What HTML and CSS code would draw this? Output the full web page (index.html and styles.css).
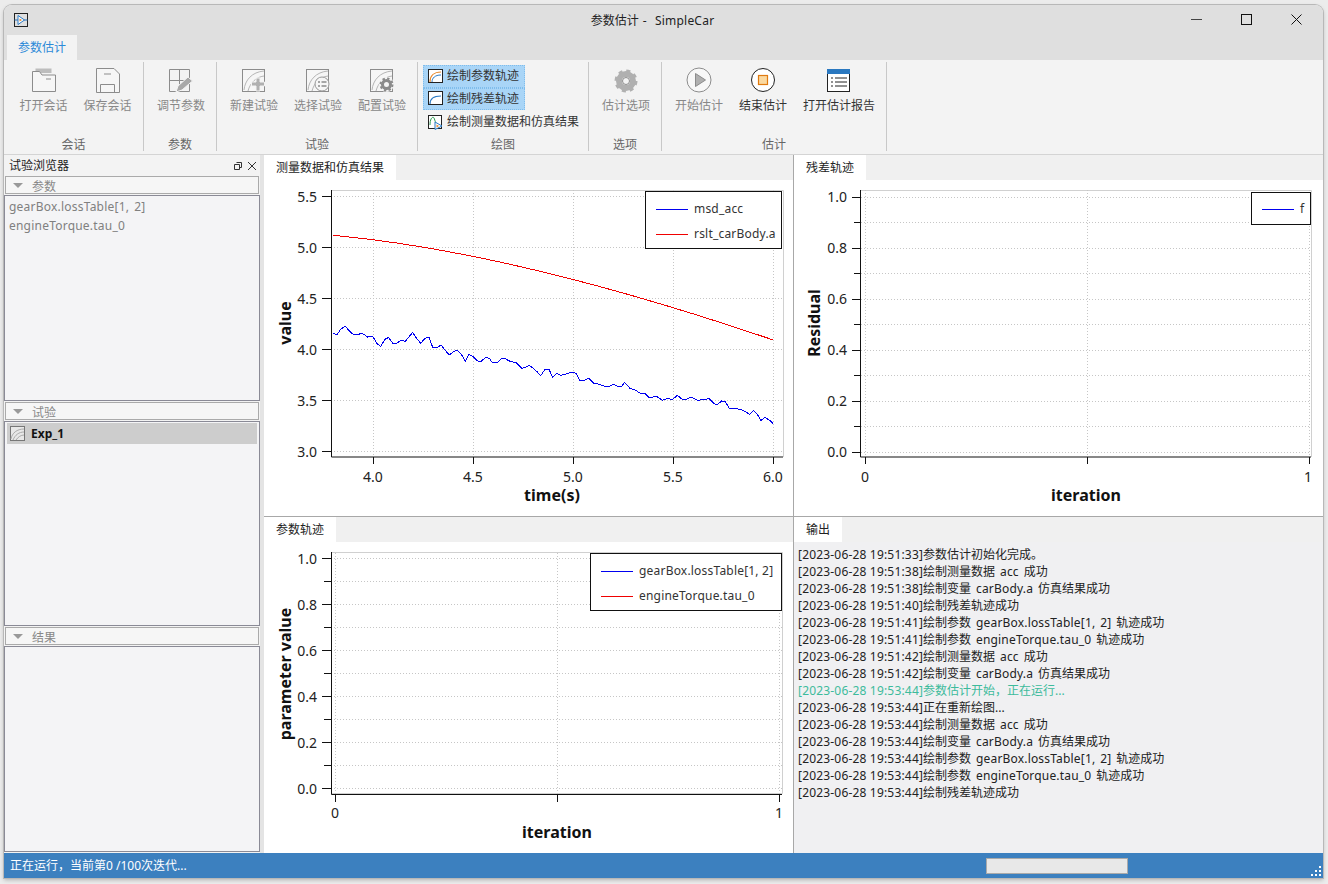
FILE: index.html
```html
<!DOCTYPE html>
<html lang="zh">
<head>
<meta charset="utf-8">
<title>参数估计 - SimpleCar</title>
<link rel="stylesheet" href="styles.css">
</head>
<body>
<div class="window">
  <header class="titlebar">
    <svg class="app-icon" width="14" height="14" viewBox="0 0 14 14"><rect x=".5" y=".5" width="13" height="13" fill="none" stroke="#222"/><path d="M.5 7H4M10 7h3.500" stroke="#2a6fb5"/><path d="M4 2.500V11.500L10.500 7Z" fill="#fff" stroke="#2a7ac5"/><path d="M5.500 5.500V8.500L8 7Z" fill="#e8872a"/></svg>
    <span class="title">参数估计 -&nbsp; <span class="lat">SimpleCar</span></span>
    <div class="controls">
      <svg width="12" height="12" viewBox="0 0 12 12"><path d="M0 5.500H11" stroke="#444"/></svg>
      <svg width="12" height="12" viewBox="0 0 12 12"><rect x=".5" y=".5" width="10" height="10" fill="none" stroke="#111"/></svg>
      <svg width="12" height="12" viewBox="0 0 12 12"><path d="M.5 .5L10.500 10.500M10.500 .5L.5 10.500" stroke="#111"/></svg>
    </div>
  </header>
  <div class="tabbar"><div class="rtab">参数估计</div></div>
  <div class="ribbon">
    <section class="group g1">
      <div class="btns">
        <div class="btn off"><svg class="ico" width="26" height="26" viewBox="0 0 26 26"><path d="M4.500 1.500H20.500V6H4.500Z" fill="#bdbdbd"/><path d="M1.500 4.500H8.500L11 8H24.500V24.500H1.500Z" fill="#f6f6f6" stroke="#8c8c8c"/><path d="M15 12H20" stroke="#8c8c8c"/></svg><span>打开会话</span></div>
        <div class="btn off"><svg class="ico" width="26" height="26" viewBox="0 0 26 26"><path d="M1.500 1.500H19L24.500 7V25.500H1.500Z" fill="#f6f6f6" stroke="#8c8c8c"/><path d="M9 7H16" stroke="#8c8c8c"/><path d="M5.500 25V17.500H19.500V25" fill="none" stroke="#8c8c8c"/></svg><span>保存会话</span></div>
      </div>
      <div class="glabel">会话</div>
    </section>
    <section class="group g2">
      <div class="btns">
        <div class="btn off"><svg class="ico" width="26" height="26" viewBox="0 0 26 26"><path d="M1.500 2.500H21.500V24.500H1.500ZM11.500 2.500V24.500M1.500 13.500H21.500" fill="none" stroke="#8c8c8c"/><path d="M8 25L10 19L20 10L24.500 14L14 23Z" fill="#a8a8a8" stroke="#f3f3f3"/></svg><span>调节参数</span></div>
      </div>
      <div class="glabel">参数</div>
    </section>
    <section class="group g3">
      <div class="btns">
        <div class="btn off"><svg class="ico" width="26" height="26" viewBox="0 0 26 26"><rect x="1.500" y="2.500" width="22" height="22" fill="#f6f6f6" stroke="#8c8c8c"/><path d="M3 23C4 13 11 5 23 4M7 24C9 16 15 10 23 9" fill="none" stroke="#b5b5b5"/><path d="M15 11H19V15H23.500V19H19V24H15V19H10.500V15H15Z" fill="#b0b0b0" stroke="#f3f3f3"/></svg><span>新建试验</span></div>
        <div class="btn off"><svg class="ico" width="26" height="26" viewBox="0 0 26 26"><rect x="1.500" y="2.500" width="22" height="22" fill="#f6f6f6" stroke="#8c8c8c"/><path d="M3 23C4 13 11 5 23 4M7 24C9 16 15 10 23 9" fill="none" stroke="#b5b5b5"/><circle cx="17" cy="17" r="7" fill="#f6f6f6" stroke="#999"/><path d="M13 15h2M13 19h2M16.500 15h5M16.500 19h5" stroke="#8c8c8c" stroke-width="1.500"/></svg><span>选择试验</span></div>
        <div class="btn off"><svg class="ico" width="26" height="26" viewBox="0 0 26 26"><rect x="1.500" y="2.500" width="22" height="22" fill="#f6f6f6" stroke="#8c8c8c"/><path d="M3 23C4 13 11 5 23 4M7 24C9 16 15 10 23 9" fill="none" stroke="#b5b5b5"/><circle cx="17.500" cy="17.500" r="7.500" fill="#f3f3f3"/><circle cx="17.500" cy="17.500" r="4" fill="none" stroke="#8a8a8a" stroke-width="3"/><circle cx="17.500" cy="17.500" r="6" fill="none" stroke="#8a8a8a" stroke-width="2" stroke-dasharray="2.350 2.350"/></svg><span>配置试验</span></div>
      </div>
      <div class="glabel">试验</div>
    </section>
    <section class="group g4">
      <div class="rows">
        <div class="row on"><svg width="15" height="15" viewBox="0 0 15 15"><rect x=".5" y=".5" width="14" height="13" fill="#fff" stroke="#222"/><path d="M2 13C2 7 6 3 13 3" fill="none" stroke="#e8872a" stroke-width="1.200"/><path d="M4 13C4 9 7 6 13 6" fill="none" stroke="#2a7ac5"/></svg><span>绘制参数轨迹</span></div>
        <div class="row on"><svg width="15" height="15" viewBox="0 0 15 15"><rect x=".5" y=".5" width="14" height="13" fill="#fff" stroke="#222"/><path d="M2 13C2 8 5 5 13 5" fill="none" stroke="#2a7ac5" stroke-width="1.200"/></svg><span>绘制残差轨迹</span></div>
        <div class="row"><svg width="15" height="15" viewBox="0 0 15 15"><rect x=".5" y=".5" width="13" height="13" fill="#fff" stroke="#222"/><path d="M2 10C2 3 5 1 6 3S8 11 11 11" fill="none" stroke="#2a9a50"/><path d="M7 7V14.500L14 11Z" fill="#fff" stroke="#2a7ac5"/><path d="M8.500 9.500V12.500L11 11Z" fill="#e8872a"/></svg><span>绘制测量数据和仿真结果</span></div>
      </div>
      <div class="glabel">绘图</div>
    </section>
    <section class="group g5">
      <div class="btns">
        <div class="btn off"><svg class="ico" width="26" height="26" viewBox="0 0 26 26"><circle cx="13" cy="14" r="7" fill="none" stroke="#b0b0b0" stroke-width="6"/><circle cx="13" cy="14" r="10" fill="none" stroke="#b0b0b0" stroke-width="3" stroke-dasharray="4 3.850"/><circle cx="13" cy="14" r="3.500" fill="#f3f3f3" stroke="#8c8c8c"/></svg><span>估计选项</span></div>
      </div>
      <div class="glabel">选项</div>
    </section>
    <section class="group g6">
      <div class="btns">
        <div class="btn off"><svg class="ico" width="26" height="26" viewBox="0 0 26 26"><circle cx="13" cy="13" r="12" fill="#f8f8f8" stroke="#8c8c8c"/><path d="M9.500 6.500V19.500L19.500 13Z" fill="#b0b0b0" stroke="#8c8c8c"/></svg><span>开始估计</span></div>
        <div class="btn"><svg class="ico" width="26" height="26" viewBox="0 0 26 26"><circle cx="13" cy="13" r="11.500" fill="#fff" stroke="#222"/><rect x="8.500" y="8.500" width="9" height="9" fill="#fbd9a0" stroke="#e07a10" stroke-width="1.200"/></svg><span>结束估计</span></div>
        <div class="btn wide"><svg class="ico" width="26" height="26" viewBox="0 0 26 26"><rect x="1.500" y="2.500" width="22" height="22" fill="#fff" stroke="#222"/><rect x="1" y="2" width="23" height="5" fill="#2a78c0"/><path d="M5 11h2M5 15h2M5 19h2M9 11H21M9 15H21M9 19H21" stroke="#222"/></svg><span>打开估计报告</span></div>
      </div>
      <div class="glabel">估计</div>
    </section>
  </div>

  <main class="main">
    <aside class="sidebar">
      <div class="dock-title">
        <span>试验浏览器</span>
        <svg width="10" height="10" viewBox="0 0 10 10"><path d="M3.500 1.500H8.500V6.500H6.500M1.500 3.500H6.500V8.500H1.500Z" fill="none" stroke="#333"/></svg>
        <svg width="10" height="10" viewBox="0 0 10 10"><path d="M1 1L9 9M9 1L1 9" stroke="#333"/></svg>
      </div>
      <div class="sec-head"><i class="tri"></i><span>参数</span></div>
      <div class="list l1">
        <div class="item lat">gearBox.lossTable[1, 2]</div>
        <div class="item lat">engineTorque.tau_0</div>
      </div>
      <div class="sec-head"><i class="tri"></i><span>试验</span></div>
      <div class="list l2">
        <div class="exp">
          <svg width="15" height="15" viewBox="0 0 15 15"><rect x=".5" y=".5" width="14" height="14" fill="#e8e8e8" stroke="#777"/><path d="M1 13C2 7 7 3 14 3M3 14C5 9 9 6 14 6M6 14C8 11 11 9 14 9" fill="none" stroke="#aaa"/></svg>
          <b>Exp_1</b>
        </div>
      </div>
      <div class="sec-head"><i class="tri"></i><span>结果</span></div>
      <div class="list l3"></div>
    </aside>
    <div class="splitter"></div>
    <div class="center">
      <section class="panel">
        <div class="tabs"><div class="tab">测量数据和仿真结果</div></div>
        <svg class="plot" width="529" height="336" viewBox="264 180 529 336">
          <path class="frame" d="M331 190.500H783.500V457"/>
          <path class="grid" d="M331 196.500H783M331 247.500H783M331 298.500H783M331 349.500H783M331 400.500H783M331 451.500H783M373.500 190V457M473.500 190V457M573.500 190V457M673.500 190V457M773.500 190V457"/>
          <path class="axis" d="M331.500 190V457H783"/>
          <path class="axis" d="M322 196.500H331M322 247.500H331M322 298.500H331M322 349.500H331M322 400.500H331M322 451.500H331M373.500 457V464M473.500 457V464M573.500 457V464M673.500 457V464M773.500 457V464"/>
          <g class="tl ty"><text x="317" y="202">5.5</text><text x="317" y="253">5.0</text><text x="317" y="304">4.5</text><text x="317" y="355">4.0</text><text x="317" y="406">3.5</text><text x="317" y="457">3.0</text></g>
          <g class="tl tx"><text x="373" y="482">4.0</text><text x="473" y="482">4.5</text><text x="573" y="482">5.0</text><text x="673" y="482">5.5</text><text x="773" y="482">6.0</text></g>
          <text class="at tx" x="552" y="501">time(s)</text>
          <text class="at tx" transform="translate(291 323) rotate(-90)">value</text>
          <polyline class="blue" transform="translate(320 300) scale(.33333)" points="40,100 50,105 62,88 75,78 90,95 102,105 112,105 123,100 133,104 143,111 158,108 170,130 182,139 195,118 206,112 218,130 230,130 243,121 256,124 278,97 290,115 302,130 315,115 327,112 338,142 352,142 363,135 375,150 388,165 400,155 411,150 425,165 436,184 447,163 460,170 472,182 481,186 497,172 508,175 518,189 530,189 545,175 557,177 570,184 590,189 605,205 615,202 627,196 640,205 650,214 662,227 675,208 687,208 698,232 711,220 722,226 735,223 757,216 768,220 780,243 793,241 806,235 820,249 835,252 855,259 868,259 880,253 893,259 905,259 914,247 930,265 945,270 960,279 975,280 987,292 1000,291 1010,289 1027,301 1040,296 1058,298 1072,286 1087,298 1100,298 1112,292 1122,295 1135,303 1147,297 1157,298 1168,296 1180,309 1190,315 1205,303 1215,304 1228,325 1245,326 1262,328 1290,343 1300,332 1310,340 1323,361 1335,352 1350,362 1360,371"/>
          <path class="red" d="M333 235.300C450 246 600 281 773.300 340"/>
          <rect class="legend" x="645.500" y="191.500" width="136" height="57"/>
          <path class="blue" d="M656 209.500H688"/><path class="red" d="M656 234.500H688"/>
          <text class="lg" x="694" y="213">msd_acc</text><text class="lg" x="694" y="238">rslt_carBody.a</text>
        </svg>
      </section>
      <div class="vline"></div>
      <section class="panel">
        <div class="tabs"><div class="tab">残差轨迹</div></div>
        <svg class="plot" width="529" height="336" viewBox="794 180 529 336">
          <path class="frame" d="M861 190.500H1311.500V457"/>
          <path class="grid" d="M861 197.500H1311M861 222.500H1311M861 248.500H1311M861 273.500H1311M861 299.500H1311M861 324.500H1311M861 350.500H1311M861 375.500H1311M861 401.500H1311M861 426.500H1311M861 452.500H1311M865.500 190V457M1087.500 190V457M1309.500 190V457"/>
          <path class="axis" d="M860.500 190V457H1311"/>
          <path class="axis" d="M852 197.500H860M854 222.500H860M852 248.500H860M854 273.500H860M852 299.500H860M854 324.500H860M852 350.500H860M854 375.500H860M852 401.500H860M854 426.500H860M852 452.500H860M865.500 457V464M1087.500 457V464M1309.500 457V464"/>
          <g class="tl ty"><text x="847" y="202">1.0</text><text x="847" y="253">0.8</text><text x="847" y="304">0.6</text><text x="847" y="355">0.4</text><text x="847" y="406">0.2</text><text x="847" y="457">0.0</text></g>
          <g class="tl tx"><text x="865" y="482">0</text><text x="1308" y="482">1</text></g>
          <text class="at tx" x="1086" y="501">iteration</text>
          <text class="at tx" transform="translate(820 323) rotate(-90)">Residual</text>
          <rect class="legend" x="1251.500" y="192.500" width="59" height="32"/>
          <path class="blue" d="M1262 209.500H1294"/>
          <text class="lg" x="1300" y="213">f</text>
        </svg>
      </section>
      <div class="hline"></div>
      <section class="panel">
        <div class="tabs"><div class="tab">参数轨迹</div></div>
        <svg class="plot" width="529" height="311" viewBox="264 542 529 311">
          <path class="frame" d="M331 552.500H782.500V793.500H331"/>
          <path class="grid" d="M331 558.500H782M331 581.500H782M331 604.500H782M331 627.500H782M331 650.500H782M331 673.500H782M331 696.500H782M331 719.500H782M331 742.500H782M331 765.500H782M331 788.500H782M335.500 553V794M557.500 553V794M779.500 553V794"/>
          <path class="axis" d="M331.500 552V794.500H782"/>
          <path class="axis" d="M322 558.500H331M324 581.500H331M322 604.500H331M324 627.500H331M322 650.500H331M324 673.500H331M322 696.500H331M324 719.500H331M322 742.500H331M324 765.500H331M322 788.500H331M335.500 795V802M557.500 795V802M779.500 795V802"/>
          <g class="tl ty"><text x="317" y="564">1.0</text><text x="317" y="610">0.8</text><text x="317" y="656">0.6</text><text x="317" y="702">0.4</text><text x="317" y="748">0.2</text><text x="317" y="794">0.0</text></g>
          <g class="tl tx"><text x="335" y="818">0</text><text x="779" y="818">1</text></g>
          <text class="at tx" x="557" y="838">iteration</text>
          <text class="at tx" transform="translate(291 674) rotate(-90)">parameter value</text>
          <rect class="legend" x="590.500" y="553.500" width="191" height="57"/>
          <path class="blue" d="M601 571.500H633"/><path class="red" d="M601 596.500H633"/>
          <text class="lg" x="639" y="575">gearBox.lossTable[1, 2]</text><text class="lg" x="639" y="600">engineTorque.tau_0</text>
        </svg>
      </section>
      <div class="vline"></div>
      <section class="panel">
        <div class="tabs"><div class="tab">输出</div></div>
        <div class="log">
          <p><span class="lat">[2023-06-28 19:51:33]</span>参数估计初始化完成。</p>
          <p><span class="lat">[2023-06-28 19:51:38]</span>绘制测量数据<span class="lat"> acc </span>成功</p>
          <p><span class="lat">[2023-06-28 19:51:38]</span>绘制变量<span class="lat"> carBody.a </span>仿真结果成功</p>
          <p><span class="lat">[2023-06-28 19:51:40]</span>绘制残差轨迹成功</p>
          <p><span class="lat">[2023-06-28 19:51:41]</span>绘制参数<span class="lat"> gearBox.lossTable[1, 2] </span>轨迹成功</p>
          <p><span class="lat">[2023-06-28 19:51:41]</span>绘制参数<span class="lat"> engineTorque.tau_0 </span>轨迹成功</p>
          <p><span class="lat">[2023-06-28 19:51:42]</span>绘制测量数据<span class="lat"> acc </span>成功</p>
          <p><span class="lat">[2023-06-28 19:51:42]</span>绘制变量<span class="lat"> carBody.a </span>仿真结果成功</p>
          <p class="ok"><span class="lat">[2023-06-28 19:53:44]</span>参数估计开始，正在运行...</p>
          <p><span class="lat">[2023-06-28 19:53:44]</span>正在重新绘图...</p>
          <p><span class="lat">[2023-06-28 19:53:44]</span>绘制测量数据<span class="lat"> acc </span>成功</p>
          <p><span class="lat">[2023-06-28 19:53:44]</span>绘制变量<span class="lat"> carBody.a </span>仿真结果成功</p>
          <p><span class="lat">[2023-06-28 19:53:44]</span>绘制参数<span class="lat"> gearBox.lossTable[1, 2] </span>轨迹成功</p>
          <p><span class="lat">[2023-06-28 19:53:44]</span>绘制参数<span class="lat"> engineTorque.tau_0 </span>轨迹成功</p>
          <p><span class="lat">[2023-06-28 19:53:44]</span>绘制残差轨迹成功</p>
        </div>
      </section>
    </div>
  </main>
  <footer class="statusbar">
    <span class="status">正在运行，当前第0 /100次迭代...</span>
    <div class="progress"></div>
    <svg class="grip" width="12" height="12" viewBox="0 0 12 12"><path fill="#fff" d="M9 1h2v2H9zM5 5h2v2H5zM9 5h2v2H9zM1 9h2v2H1zM5 9h2v2H5zM9 9h2v2H9z"/></svg>
  </footer>
</div>
</body>
</html>
```
FILE: styles.css
```css
* { box-sizing: border-box; }
html, body { margin: 0; height: 100%; }
body {
  background: #ececec;
  font: 12px/16px "Noto Sans", "Noto Sans CJK SC", sans-serif;
  color: #222;
  overflow: hidden;
}
.lat { letter-spacing: .22px; word-spacing: 1.6px; }
.window {
  width: 1319px;
  height: 873px;
  margin: 5px 0 0 4px;
  display: flex;
  flex-direction: column;
  border-radius: 8px 8px 0 0;
  box-shadow: 0 0 0 1px #b8b8b8, 0 2px 4px rgba(0,0,0,.25);
  overflow: hidden;
  background: #f3f3f3;
}
.titlebar {
  height: 30px;
  background: #dfdfdf;
  display: flex;
  align-items: center;
  position: relative;
  padding-left: 10px;
}
.title { position: absolute; left: 0; right: 22px; top: 8px; text-align: center; word-spacing: 1px; }
.controls { margin-left: auto; display: flex; gap: 38px; padding-right: 20px; }
.app-icon { flex: none; }
.tabbar { height: 25px; background: #dfdfdf; padding-left: 3px; display: flex; }
.rtab {
  width: 70px; background: #f3f3f3; color: #2c8ad8;
  text-align: center; line-height: 26px;
}
.ribbon {
  height: 95px;
  display: flex;
  background: #f3f3f3;
  padding-top: 2px;
  border-bottom: 1px solid #d4d4d4;
  flex: none;
}
.group {
  height: 89px;
  border-right: 1px solid #c8c8c8;
  display: flex;
  flex-direction: column;
  flex: none;
}
.g1 { width: 140px; }
.g2 { width: 73px; }
.g3 { width: 201px; }
.g4 { width: 171px; }
.g5 { width: 73px; }
.g6 { width: 225px; }
.btns { flex: 1; display: flex; justify-content: center; padding: 5px 0 0 2px; }
.g1 .btns { padding-left: 4px; }
.btn { width: 64px; display: flex; flex-direction: column; align-items: center; color: #333; }
.btn.wide { width: 88px; }
.btn.off { color: #888; }
.ico { flex: none; margin-bottom: 5px; }
.glabel { height: 12px; line-height: 12px; text-align: center; color: #666; }
.rows { flex: 1; padding: 3px 0 0 5px; }
.row {
  height: 22.5px; display: flex; align-items: center; gap: 4px;
  padding-left: 5px; color: #333; width: 165px;
}
.row:last-child { margin-top: 1px; }
.row.on {
  width: 102px; background: #a9d5f7; outline: 1px dotted #7fbdec; outline-offset: -1px;
}
.main { flex: 1; display: flex; min-height: 0; }
.sidebar { width: 256px; display: flex; flex-direction: column; flex: none; }
.dock-title { height: 21px; display: flex; align-items: center; gap: 4px; padding: 0 3px 0 5px; }
.dock-title span { margin-right: auto; }
.sec-head {
  height: 18px; margin-left: 1px; width: 254px; border: 1px solid #aaa; background: #f6f6f6;
  display: flex; align-items: center; color: #888; flex: none; padding-left: 7px;
}
.sec-head span { padding-top: 3px; }
.tri { width: 0; height: 0; border: 5px solid transparent; border-top: 5px solid #999; border-bottom: 0; margin-right: 9px; }
.list { border: 1px solid #8a8a96; background: #f4f4f6; margin: 1px 0; flex: none; }
.l1 { height: 206px; padding: 1px 0 0 4px; }
.l2 { height: 205px; padding: 1px 1px 0; }
.l3 { height: 206px; }
.item { height: 19px; line-height: 19px; color: #808080; }
.exp { height: 21px; margin: 0 1px; background: #cdcdcd; display: flex; align-items: center; gap: 6px; padding-left: 3px; color: #111; }
.splitter { width: 4px; background: #e4e4e4; flex: none; }
.center {
  flex: 1; display: grid;
  grid-template-columns: 529px 1px 529px;
  grid-template-rows: 361px 1px 336px;
  background: #fff;
}
.vline { background: #a8a8a8; }
.hline { grid-column: 1 / 4; background: #a8a8a8; }
.panel { display: flex; flex-direction: column; overflow: hidden; background: #fff; }
.tabs { height: 25px; background: #f0f0f0; display: flex; flex: none; }
.tab { padding: 0 12px; background: #fff; line-height: 25px; color: #222; }
.plot { display: block; }
.frame { fill: none; stroke: #d0d0d0; }
.grid { fill: none; stroke: #c6c6c6; stroke-dasharray: 1 2; }
.axis { fill: none; stroke: #111; }
.tl text { font-size: 14px; fill: #222; }
.ty { text-anchor: end; }
.tx { text-anchor: middle; }
.at { font-size: 16px; font-weight: 700; fill: #111; }
.blue { fill: none; stroke: #0000f0; vector-effect: non-scaling-stroke; shape-rendering: crispEdges; }
.red { fill: none; stroke: #f00000; shape-rendering: crispEdges; }
.legend { fill: #fff; stroke: #111; }
.lg { font-size: 12px; fill: #333; letter-spacing: .2px; }
.log { flex: 1; background: #f0f0f2; padding: 4px 4px 0; }
.log p { margin: 0; height: 17px; line-height: 17px; white-space: nowrap; }
.log .lat { letter-spacing: .18px; }
.log p > .lat:first-child { word-spacing: 0; }
.log .ok { color: #3dbb9c; }
.statusbar {
  height: 25px; flex: none; background: #3c80bf; color: #fff;
  display: flex; align-items: center; position: relative; padding-left: 6px;
}
.progress {
  position: absolute; left: 982px; top: 5px; width: 142px; height: 16px;
  background: #e8e8e8; border: 1px solid #aaa;
}
.grip { position: absolute; right: 1px; bottom: 1px; }
```
